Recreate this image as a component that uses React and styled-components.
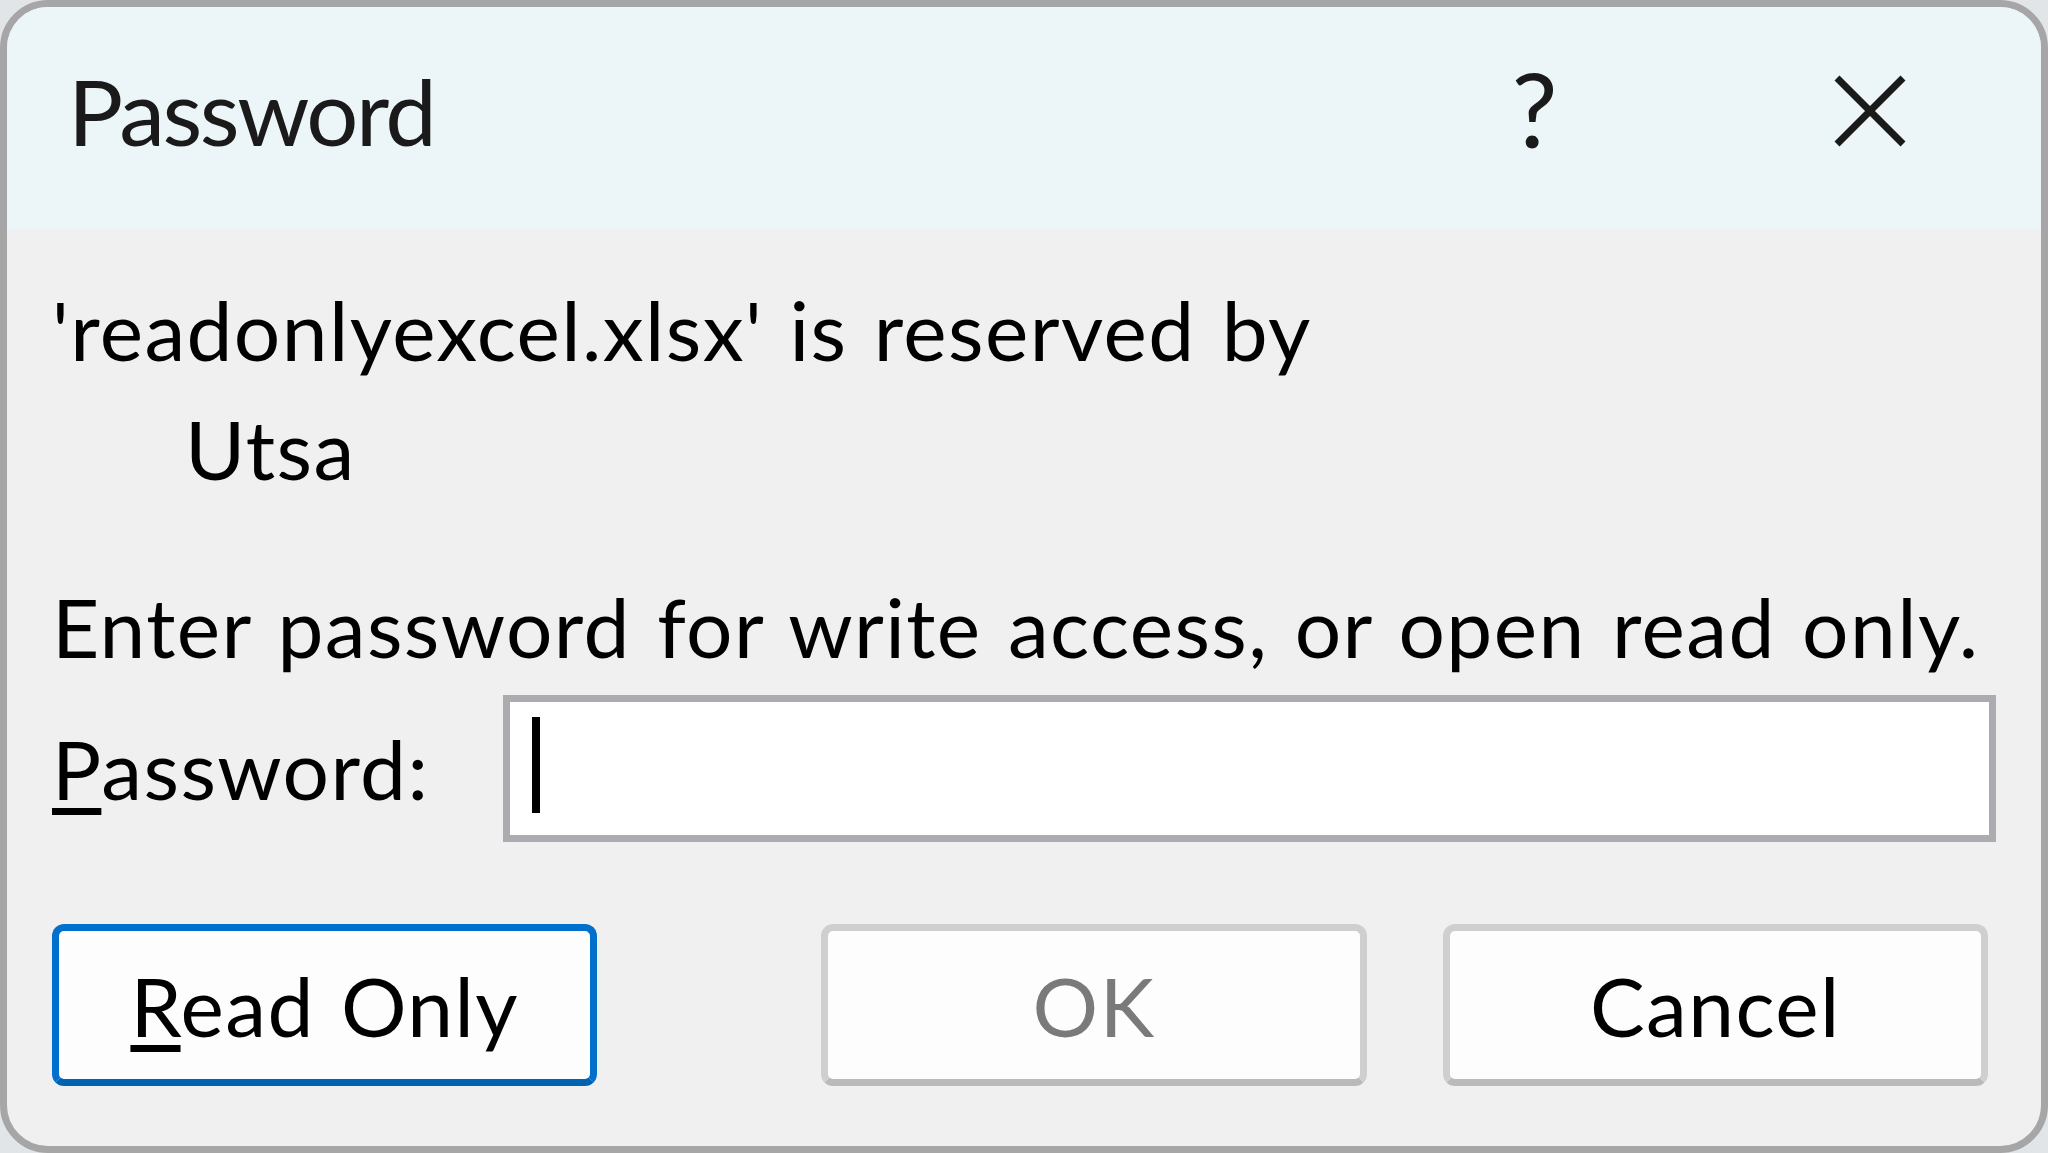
import React from 'react';
import styled, { createGlobalStyle } from 'styled-components';

const GlobalStyle = createGlobalStyle`
  html, body {
    margin: 0;
    padding: 0;
    background: #e2e5e7;
  }
  body {
    font-family: Lato, "Open Sans", sans-serif;
    color: #000;
  }
`;

const Dialog = styled.div`
  box-sizing: border-box;
  width: 2048px;
  height: 1153px;
  border: 7px solid #a6a6a6;
  border-radius: 48px;
  overflow: hidden;
  background: #f0f0f0;
  display: flex;
  flex-direction: column;
  letter-spacing: 1.4px;
  word-spacing: 4px;
`;

const TitleBar = styled.div`
  height: 222px;
  flex-shrink: 0;
  background: #ecf5f8;
  display: flex;
  align-items: flex-start;
  padding: 58px 0 0 61px;
  box-sizing: border-box;
`;

const Title = styled.div`
  flex: 1;
  font-size: 92px;
  line-height: 1;
  letter-spacing: -2.5px;
  color: #1a1a1a;
`;

const HelpGlyph = styled.div`
  font-size: 103px;
  line-height: 1;
  margin-top: -8px;
  color: #1a1a1a;
  margin-right: 274px;
`;

const CloseIcon = styled.svg`
  width: 74px;
  height: 74px;
  margin-top: 9px;
  margin-right: 134px;
`;

const Body = styled.div`
  flex: 1;
  padding: 41px 45px 0 45px;
  display: flex;
  flex-direction: column;
`;

const TextLine = styled.div`
  font-size: 82px;
  line-height: 119px;
  white-space: nowrap;
  margin-left: ${(p) => p.$indent || 0}px;
  margin-top: ${(p) => p.$gap || 0}px;
`;

const PasswordRow = styled.div`
  display: flex;
  align-items: center;
  margin-top: 9px;
  height: 147px;
`;

const Label = styled.label`
  font-size: 82px;
  line-height: 147px;
  width: 451px;
  flex-shrink: 0;
`;

const Key = styled.span`
  text-decoration: underline;
  text-decoration-thickness: 7px;
  text-underline-offset: 8px;
`;

const InputBox = styled.div`
  flex: 1;
  height: 147px;
  box-sizing: border-box;
  border: 7px solid #abacaf;
  background: #fff;
  padding: 15px 0 0 22px;
`;

const Caret = styled.div`
  width: 8px;
  height: 96px;
  background: #000;
`;

const ButtonRow = styled.div`
  display: flex;
  margin-top: 82px;
  margin-right: 8px;
  gap: 76px;
`;

const Button = styled.button`
  box-sizing: border-box;
  width: 546px;
  height: 162px;
  border-radius: 12px;
  background: #fdfdfd;
  font-family: Lato, "Open Sans", sans-serif;
  font-size: 82px;
  letter-spacing: 1.4px;
  word-spacing: 4px;
  line-height: 1;
  padding: 0;
  color: ${(p) => (p.disabled ? '#7a7a7a' : '#000')};
  border: 7px solid ${(p) => (p.$primary ? '#0070cc' : '#cfcfcf')};
  border-bottom-color: ${(p) => (p.$primary ? '#0063b1' : '#bababa')};
  margin-right: ${(p) => (p.$primary ? 148 : 0)}px;
  cursor: default;
`;

export default function App() {
  return (
    <>
      <GlobalStyle />
      <Dialog>
        <TitleBar>
          <Title>Password</Title>
          <HelpGlyph>?</HelpGlyph>
          <CloseIcon viewBox="0 0 74 74">
            <path d="M4 4 L70 70 M70 4 L4 70" stroke="#1a1a1a" strokeWidth="7" fill="none" />
          </CloseIcon>
        </TitleBar>
        <Body>
          <TextLine>'readonlyexcel.xlsx' is reserved by</TextLine>
          <TextLine $indent={133}>Utsa</TextLine>
          <TextLine $gap={59}>Enter password for write access, or open read only.</TextLine>
          <PasswordRow>
            <Label><Key>P</Key>assword:</Label>
            <InputBox>
              <Caret />
            </InputBox>
          </PasswordRow>
          <ButtonRow>
            <Button $primary><Key>R</Key>ead Only</Button>
            <Button disabled>OK</Button>
            <Button>Cancel</Button>
          </ButtonRow>
        </Body>
      </Dialog>
    </>
  );
}
